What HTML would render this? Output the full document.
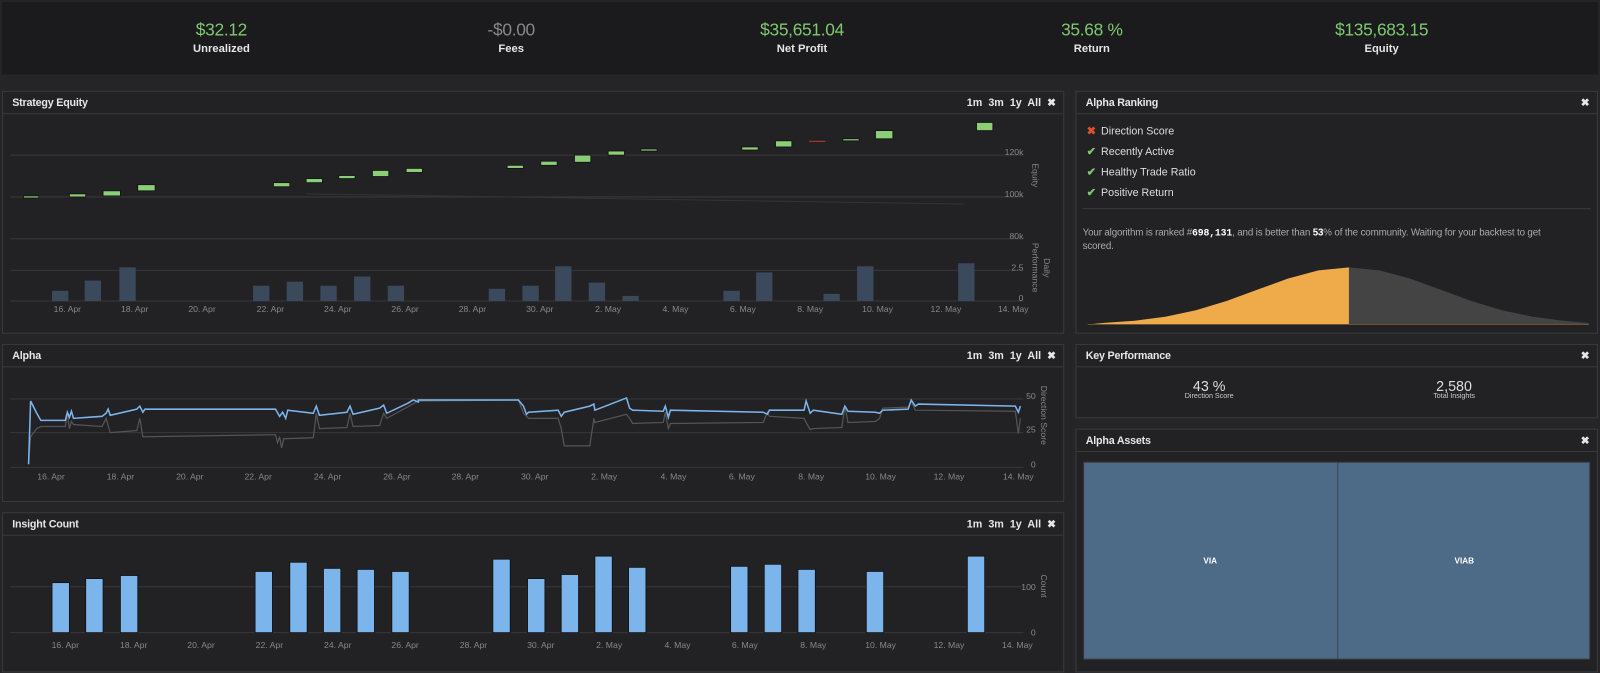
<!DOCTYPE html>
<html><head><meta charset="utf-8"><style>
*{margin:0;padding:0;box-sizing:border-box}
html,body{width:1600px;height:673px;overflow:hidden;background:#252528;font-family:"Liberation Sans",sans-serif}
#w{position:absolute;left:0;top:0;width:1568px;height:660px;transform:scale(1.0204);transform-origin:0 0}
.top{position:absolute;left:2px;top:2px;width:1564px;height:71px;background:#1b1b1d}
.st{position:absolute;top:20px;width:200px;margin-left:-100px;text-align:center}
.st .v{font-size:17px;color:#7fc870;letter-spacing:-0.3px}
.st .l{font-size:11px;font-weight:bold;color:#e6e6e6;margin-top:2px}
.p{position:absolute;background:#222225;border:1px solid #3a3a3e}
.p .h{height:22px;border-bottom:1px solid #3a3a3e;font-size:10.5px;font-weight:bold;color:#e6e6e6;padding:5px 0 0 9px;letter-spacing:-0.2px}
.ctl{position:absolute;right:7px;top:5px;font-size:10.5px;font-weight:bold;color:#e6e6e6;word-spacing:3px}
svg{position:absolute;left:0;top:0}
.ax{font-size:8.5px;fill:#888;font-family:"Liberation Sans",sans-serif}
.it{position:absolute;left:10px;font-size:10.5px;color:#ddd}
.it b{display:inline-block;width:14px;font-size:11px}
</style></head><body><div id="w">
<div class="top"></div>
<div class="st" style="left:217px"><div class="v">$32.12</div><div class="l">Unrealized</div></div>
<div class="st" style="left:501px"><div class="v" style="color:#888">-$0.00</div><div class="l">Fees</div></div>
<div class="st" style="left:786px"><div class="v">$35,651.04</div><div class="l">Net Profit</div></div>
<div class="st" style="left:1070px"><div class="v">35.68 %</div><div class="l">Return</div></div>
<div class="st" style="left:1354px"><div class="v">$135,683.15</div><div class="l">Equity</div></div>

<div class="p" style="left:2px;top:89px;width:1041px;height:238px"><div class="h">Strategy Equity</div><div class="ctl">1m 3m 1y All ✖</div></div>
<div class="p" style="left:2px;top:337px;width:1041px;height:155px"><div class="h">Alpha</div><div class="ctl">1m 3m 1y All ✖</div></div>
<div class="p" style="left:2px;top:502px;width:1041px;height:157px"><div class="h">Insight Count</div><div class="ctl">1m 3m 1y All ✖</div></div>
<div class="p" style="left:1054px;top:89px;width:512px;height:238px"><div class="h">Alpha Ranking</div><div class="ctl">✖</div>
<div class="it" style="top:32px"><b style="color:#e0502a">✖</b>Direction Score</div>
<div class="it" style="top:52px"><b style="color:#7fc870">✔</b>Recently Active</div>
<div class="it" style="top:72px"><b style="color:#7fc870">✔</b>Healthy Trade Ratio</div>
<div class="it" style="top:92px"><b style="color:#7fc870">✔</b>Positive Return</div>
<div style="position:absolute;left:6px;right:6px;top:114px;border-top:1px solid #3a3a3e"></div>
<div style="position:absolute;left:6px;width:462px;top:132px;font-size:9.6px;color:#aaa;line-height:13px;letter-spacing:-0.15px">Your algorithm is ranked #<b style="color:#fff;font-family:'Liberation Mono',monospace">698,131</b>, and is better than <b style="color:#fff">53</b>% of the community. Waiting for your backtest to get scored.</div>
</div>
<div class="p" style="left:1054px;top:337px;width:512px;height:73px"><div class="h">Key Performance</div><div class="ctl">✖</div>
<div style="position:absolute;left:60px;width:140px;top:33px;text-align:center;color:#ddd;font-size:14px;line-height:14px">43 %<div style="font-size:7px;line-height:8px;color:#ccc">Direction Score</div></div>
<div style="position:absolute;left:300px;width:140px;top:33px;text-align:center;color:#ddd;font-size:14px;line-height:14px">2,580<div style="font-size:7px;line-height:8px;color:#ccc">Total Insights</div></div>
</div>
<div class="p" style="left:1054px;top:420px;width:512px;height:239px"><div class="h">Alpha Assets</div><div class="ctl">✖</div></div>

<svg width="1568" height="660" viewBox="0 0 1568 660">
<rect x="1062" y="453" width="496" height="193" fill="#4d6a87" stroke="#3a3a3e"/>
<line x1="1311" y1="453" x2="1311" y2="646" stroke="#3a4555"/>
<text x="1186" y="552" font-size="8" font-weight="bold" fill="#fff" text-anchor="middle" font-family="Liberation Sans">VIA</text>
<text x="1435" y="552" font-size="8" font-weight="bold" fill="#fff" text-anchor="middle" font-family="Liberation Sans">VIAB</text>
<path d="M1066,318 L1082,316.4 1112,314.3 1142,310.4 1172,304 1202,295 1232,284 1262,273 1292,265 1322,262 L1322,318Z" fill="#efaa4a"/>
<path d="M1322,262 L1352,265 1382,273 1412,284 1442,295 1472,304 1502,310.4 1532,314.3 1557,316.5 L1557,318 1322,318Z" fill="#444"/>
<line x1="1066" y1="318" x2="1557" y2="318" stroke="#6a5530"/>
<g stroke="#38383c"><line x1="10" y1="152" x2="1003" y2="152"/><line x1="10" y1="193" x2="1003" y2="193"/><line x1="10" y1="234" x2="1003" y2="234"/><line x1="10" y1="265" x2="1003" y2="265"/><line x1="10" y1="295" x2="1003" y2="295"/></g>
<g class="ax" text-anchor="end"><text x="1003" y="152">120k</text><text x="1003" y="193">100k</text><text x="1003" y="234">80k</text><text x="1003" y="265">2.5</text><text x="1003" y="295">0</text></g>
<text class="ax" transform="translate(1012,160) rotate(90)">Equity</text>
<text class="ax" transform="translate(1023,253) rotate(90)">Daily</text>
<text class="ax" transform="translate(1012,238) rotate(90)">Performance</text>
<g fill="#3a4a5c">
<rect x="51" y="285" width="16" height="10"/><rect x="83" y="275" width="16" height="20"/><rect x="117" y="262" width="16" height="33"/>
<rect x="248" y="280" width="16" height="15"/><rect x="281" y="276" width="16" height="19"/><rect x="314" y="280" width="16" height="15"/><rect x="347" y="271" width="16" height="24"/><rect x="380" y="280" width="16" height="15"/>
<rect x="479" y="283" width="16" height="12"/><rect x="512" y="280" width="16" height="15"/><rect x="544" y="261" width="16" height="34"/><rect x="577" y="277" width="16" height="18"/><rect x="610" y="290" width="16" height="5"/>
<rect x="709" y="285" width="16" height="10"/><rect x="741" y="267" width="16" height="28"/><rect x="807" y="288" width="16" height="7"/><rect x="840" y="261" width="16" height="34"/><rect x="939" y="258" width="16" height="37"/>
</g>
<line x1="300" y1="190" x2="945" y2="200" stroke="#333" stroke-width="1"/>
<g fill="#8ccd78" stroke="#111" stroke-width="0.8">
<rect x="23" y="192" width="15" height="2"/><rect x="68" y="190" width="16" height="3"/><rect x="101" y="187" width="17" height="5"/><rect x="135" y="181" width="17" height="6"/>
<rect x="268" y="179" width="16" height="4"/><rect x="300" y="175" width="16" height="4"/><rect x="332" y="172" width="16" height="3"/><rect x="365" y="167" width="16" height="6"/><rect x="398" y="165" width="16" height="4"/>
<rect x="497" y="162" width="16" height="3"/><rect x="530" y="158" width="16" height="4"/><rect x="563" y="152" width="16" height="7"/><rect x="596" y="148" width="16" height="4"/><rect x="628" y="146" width="16" height="2"/>
<rect x="727" y="144" width="16" height="3"/><rect x="760" y="138" width="16" height="6"/><rect x="826" y="136" width="16" height="2"/><rect x="858" y="128" width="17" height="8"/><rect x="957" y="120" width="16" height="8"/>
</g>
<rect x="793" y="138" width="16" height="1" fill="#c0392b"/>
<g class="ax" text-anchor="middle">
<text x="66" y="306">16. Apr</text><text x="132" y="306">18. Apr</text><text x="198" y="306">20. Apr</text><text x="265" y="306">22. Apr</text><text x="331" y="306">24. Apr</text><text x="397" y="306">26. Apr</text><text x="463" y="306">28. Apr</text><text x="529" y="306">30. Apr</text><text x="596" y="306">2. May</text><text x="662" y="306">4. May</text><text x="728" y="306">6. May</text><text x="794" y="306">8. May</text><text x="860" y="306">10. May</text><text x="927" y="306">12. May</text><text x="993" y="306">14. May</text>
</g>
<g stroke="#38383c"><line x1="10" y1="391" x2="1003" y2="391"/><line x1="10" y1="424" x2="1003" y2="424"/><line x1="10" y1="458" x2="1003" y2="458"/></g>
<g class="ax" text-anchor="end"><text x="1015" y="391">50</text><text x="1015" y="424">25</text><text x="1015" y="458">0</text></g>
<text class="ax" transform="translate(1020,378) rotate(90)">Direction Score</text>
<polyline fill="none" stroke="#555" stroke-width="1.2" points="28,455 30,428 36,420 40,418 64,418 66,405 68,420 70,413 72,416 100,418 104,410 108,424 134,422 137,410 140,428 142,428 270,426 272,434 274,428 276,439 278,430 307,429 310,405 313,420 340,419 343,405 346,418 372,417 376,405 379,410 410,393 508,392 513,405 518,410 547,410 550,420 553,437 578,437 582,410 583,414 614,406 617,410 620,415 650,414 652,404 655,420 657,415 748,414 752,404 754,408 788,410 790,414 794,421 797,420 825,419 828,398 831,414 858,413 862,410 865,400 890,399 893,393 897,402 995,403 998,425 1000,410"/>
<polyline fill="none" stroke="#7cb5ec" stroke-width="1.5" points="28,455 30,393 36,405 40,412 64,412 66,404 68,409 70,403 72,410 100,408 104,405 106,401 108,407 134,401 137,398 140,404 142,401 270,401 274,408 277,404 280,410 282,402 307,405 310,398 313,407 340,404 343,398 346,406 372,400 376,397 379,405 400,395 405,392 410,394 410,392 508,392 513,398 516,406 518,404 547,402 550,408 553,404 578,398 582,396 583,402 614,390 617,400 620,402 650,403 652,398 655,409 657,402 748,404 752,406 754,402 788,402 790,393 794,405 797,402 825,406 828,398 831,403 858,404 862,405 865,402 890,401 893,392 897,398 900,396 995,398 998,404 1000,398"/>
<g class="ax" text-anchor="middle">
<text x="50" y="470">16. Apr</text><text x="118" y="470">18. Apr</text><text x="186" y="470">20. Apr</text><text x="253" y="470">22. Apr</text><text x="321" y="470">24. Apr</text><text x="389" y="470">26. Apr</text><text x="456" y="470">28. Apr</text><text x="524" y="470">30. Apr</text><text x="592" y="470">2. May</text><text x="660" y="470">4. May</text><text x="727" y="470">6. May</text><text x="795" y="470">8. May</text><text x="863" y="470">10. May</text><text x="930" y="470">12. May</text><text x="998" y="470">14. May</text>
</g>
<g stroke="#38383c"><line x1="10" y1="575" x2="1003" y2="575"/><line x1="10" y1="620" x2="1003" y2="620"/></g>
<g class="ax" text-anchor="end"><text x="1015" y="578">100</text><text x="1015" y="623">0</text></g>
<text class="ax" transform="translate(1020,563) rotate(90)">Count</text>
<g fill="#7cb5ec" stroke="#111" stroke-width="0.8">
<rect x="51" y="571" width="17" height="49"/><rect x="84" y="567" width="17" height="53"/><rect x="118" y="564" width="17" height="56"/>
<rect x="250" y="560" width="17" height="60"/><rect x="284" y="551" width="17" height="69"/><rect x="317" y="557" width="17" height="63"/><rect x="350" y="558" width="17" height="62"/><rect x="384" y="560" width="17" height="60"/>
<rect x="483" y="548" width="17" height="72"/><rect x="517" y="567" width="17" height="53"/><rect x="550" y="563" width="17" height="57"/><rect x="583" y="545" width="17" height="75"/><rect x="616" y="556" width="17" height="64"/>
<rect x="716" y="555" width="17" height="65"/><rect x="749" y="553" width="17" height="67"/><rect x="782" y="558" width="17" height="62"/><rect x="849" y="560" width="17" height="60"/><rect x="948" y="545" width="17" height="75"/>
</g>
<g class="ax" text-anchor="middle">
<text x="64" y="635">16. Apr</text><text x="131" y="635">18. Apr</text><text x="197" y="635">20. Apr</text><text x="264" y="635">22. Apr</text><text x="331" y="635">24. Apr</text><text x="397" y="635">26. Apr</text><text x="464" y="635">28. Apr</text><text x="530" y="635">30. Apr</text><text x="597" y="635">2. May</text><text x="664" y="635">4. May</text><text x="730" y="635">6. May</text><text x="797" y="635">8. May</text><text x="863" y="635">10. May</text><text x="930" y="635">12. May</text><text x="997" y="635">14. May</text>
</g>
</svg>
</div></body></html>
